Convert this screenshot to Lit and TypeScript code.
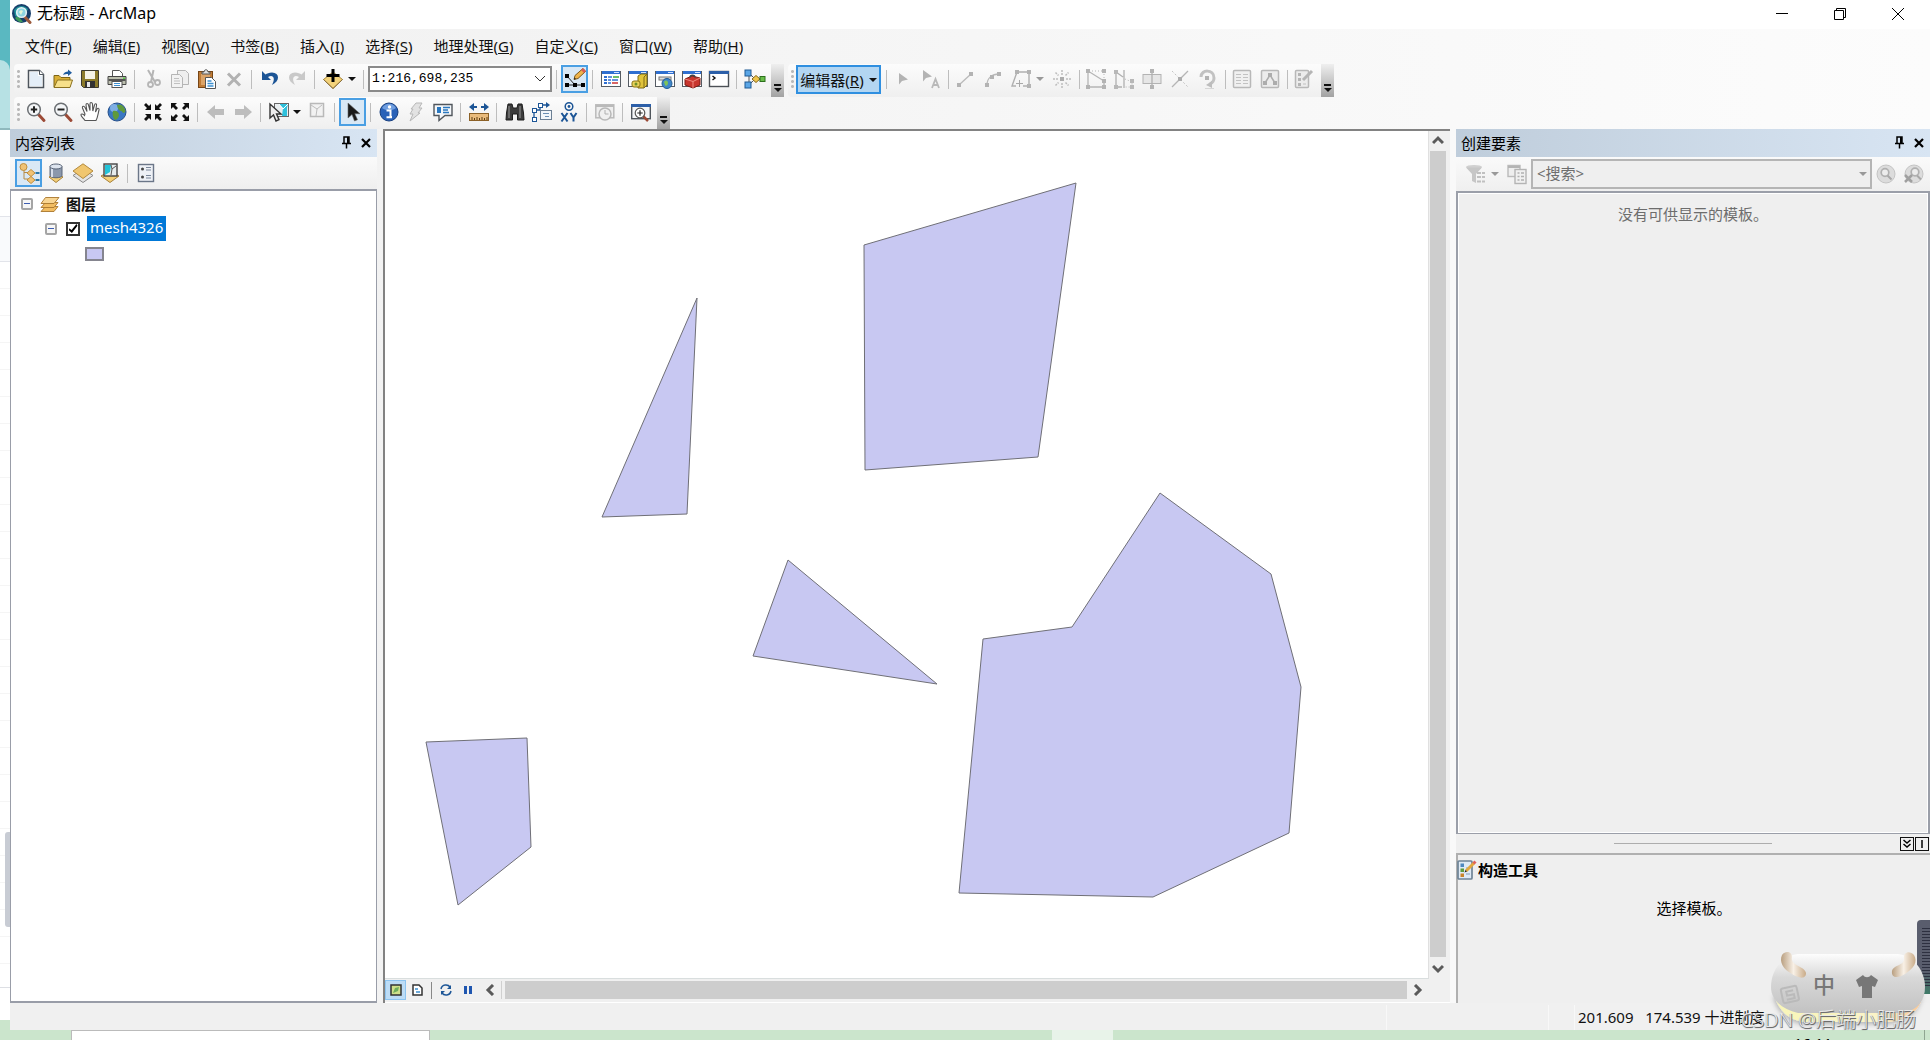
import { LitElement, html, svg, css, nothing, TemplateResult } from "lit";
import { customElement, state } from "lit/decorators.js";
import { classMap } from "lit/directives/class-map.js";

type Tool = { icon?: string; label?: string; on?: boolean; off?: boolean; caret?: boolean; sep?: boolean };

const SEP: Tool = { sep: true };

const windowFrame = (c = "#fff") => svg`
  <rect x="0.5" y="2.5" width="19" height="15" fill=${c} stroke="#555b63"/>
  <rect x="1" y="2" width="18" height="3" fill="#2f6fd0"/>
  <rect x="13" y="3" width="5" height="1" fill="#cfe0ff"/>`;

const lens = svg`
  <path d="M12.5 12.5L18 18.5" stroke="#9c4a36" stroke-width="3" stroke-linecap="round"/>
  <circle cx="8" cy="7.500" r="6.300" fill="#f3f5f7" stroke="#6b6f73" stroke-width="1.500"/>`;

const ICONS: Record<string, TemplateResult> = {
  fresh: svg`<path d="M2.500 1.500h11l4 4v13h-15z" fill="#fff" stroke="#4d545c" stroke-width="1.500"/><path d="M4 3h8v4h4v10H4z" fill="#e4eef8"/><path d="M13.500 1.500v4h4" fill="#fff" stroke="#4d545c"/>`,
  open: svg`<path d="M1 18V6.500h5l2 2h9V18z" fill="#d9ae35" stroke="#7d6416"/><path d="M1 18.500L4.500 11H19.500L17 18.500z" fill="#f7e08a" stroke="#8c7220"/><path d="M10 6c1-3 3-3.500 5-3.500V.500l4 3.200-4 3.200V5c-2 0-3 0-5 1z" fill="#1f5b9e"/>`,
  save: svg`<path d="M1.500 1.500h17v17h-15l-2-2z" fill="#8b7a2a" stroke="#3c3a30"/><rect x="5" y="2" width="10" height="8" fill="#f4f2e6"/><rect x="5" y="12" width="10" height="7" fill="#333"/><rect x="7" y="13" width="3" height="5" fill="#e8e8e8"/>`,
  print: svg`<path d="M5.500 7V1.500h7l3 3V7" fill="#fff" stroke="#555"/><path d="M1 7.500h18v8H1z" fill="#bcbfae" stroke="#444"/><path d="M1.500 11h17" stroke="#555" stroke-width="2"/><rect x="16" y="8.500" width="2" height="1.500" fill="#5c4"/><rect x="5" y="12.500" width="10" height="6" fill="#fff" stroke="#555"/><path d="M7 14.500h6M7 16.500h6" stroke="#3d8fd0"/>`,
  cut: svg`<path d="M5 1l7 12M10.500 1L8 13" stroke="#b5b5b5" stroke-width="2" fill="none"/><circle cx="7.500" cy="15.500" r="2.500" fill="none" stroke="#b5b5b5" stroke-width="1.800"/><circle cx="14.500" cy="13.500" r="2.500" fill="none" stroke="#b5b5b5" stroke-width="1.800"/>`,
  copy: svg`<path d="M7.500 1.500h8l3 3v11h-11z" fill="#efefef" stroke="#b5b5b5"/><path d="M1.500 5.500h8l3 3v10h-11z" fill="#f2f2f2" stroke="#b5b5b5"/><path d="M4 9.500h5M4 12h6M4 14.500h6" stroke="#c0c0c0"/>`,
  paste: svg`<rect x="1.500" y="2.500" width="14" height="16" fill="#bf7b36" stroke="#774616"/><rect x="4" y="5" width="9" height="11" fill="#dca468"/><path d="M5 5V3h2c0-3 4-3 4 0h2v2z" fill="#ddd" stroke="#555"/><path d="M8.500 8.500h6l4 4v7h-10z" fill="#fff" stroke="#555"/><path d="M10.500 12h4M10.500 14.500h6M10.500 17h6" stroke="#3d8fd0" stroke-width="1.300"/>`,
  del: svg`<path d="M4 4.500l12 12M16 4.500l-12 12" stroke="#b2b2b2" stroke-width="3"/>`,
  undo: svg`<path d="M2 2v9h9L8 8c5-3 8 1 4 8 8-4 8-12 0-12.500C9 3.500 7 4.500 5.500 5.500z" fill="#1c5596"/>`,
  redo: svg`<path d="M18 2v9H9l3-3C7 5 4 9 8 16 0 12 0 4 8 3.500c3 0 5 1 6.500 2z" fill="#c9c9c9"/>`,
  add: svg`<path d="M.5 10.500L10 3l9.500 7.500L10 19.500z" fill="#f3d27a" stroke="#a8873a"/><path d="M.5 10.500L10 19.500l9.500-9" fill="none" stroke="#8a7040"/><path d="M10 0v13M3.500 6.500h13" stroke="#000" stroke-width="3"/>`,
  sketch: svg`<path d="M2 7l8 9M2 16h16" stroke="#222"/><g fill="#000"><rect x="0" y="5" width="4" height="4"/><rect x="0" y="14" width="4" height="4"/><rect x="8" y="14" width="4" height="4"/><rect x="16" y="14" width="4" height="4"/></g><path d="M9 10.500l1-4 8-7 2.500 3-7.500 7z" fill="#f0b44a" stroke="#7c5a1c"/><path d="M16 1l2-2 3 3-2 2z" fill="#d95b52"/><path d="M9 10.500l.5-2 1.500 1.500z" fill="#222"/>`,
  table: svg`${windowFrame()}<path d="M3 8h3M3 11h3M3 14h3" stroke="#2f6fd0" stroke-width="2"/><path d="M7 8h4M7 11h3M7 14h3" stroke="#2f6fd0" stroke-width="1.300"/><path d="M12 8h6" stroke="#38a838" stroke-width="1.500"/><path d="M11 11h6" stroke="#2f6fd0" stroke-width="1.500"/><path d="M11 14h6" stroke="#c33" stroke-width="1.500"/>`,
  catalog: svg`${windowFrame()}<path d="M10 7l3-2h6v11l-3 3h-6z" fill="#e1c43c" stroke="#7e6a14"/><path d="M16 19V8l3-3" fill="none" stroke="#7e6a14"/><rect x="4" y="12" width="8" height="6" rx="2" fill="#e8d25a" stroke="#8a7215"/><circle cx="8" cy="15" r="1.500" fill="#6f8f2a"/>`,
  search: svg`${windowFrame()}<rect x="4" y="8" width="12" height="3" fill="#ddd" stroke="#777"/><circle cx="12" cy="14.500" r="5" fill="#3f86c8" stroke="#1f5a94"/><path d="M9 13c2-3 4-1 4 1s-2 4-3 2z" fill="#7fc457"/>`,
  toolbox: svg`${windowFrame()}<path d="M3 10l7-3 8 2v7l-7 3-8-3z" fill="#c8362e" stroke="#7d1a14"/><path d="M3 10l8 2.500 7-3.500M11 12.500V19" stroke="#f08a80" fill="none"/><path d="M8 8.500c0-3 5-3 5 0" fill="none" stroke="#444" stroke-width="1.400"/>`,
  python: svg`<rect x=".5" y="2.500" width="19" height="15" fill="#fff" stroke="#4c5056" stroke-width="1.400"/><rect x="0" y="2" width="20" height="3" fill="#2c5fa8"/><path d="M3.500 7l2.500 2-2.500 2" fill="none" stroke="#111" stroke-width="1.400"/>`,
  model: svg`<path d="M4 4v12M4 4l6 6-6 6M9 10h8" stroke="#555" fill="none"/><rect x="0" y="1" width="6" height="6" fill="#5ba6e6" stroke="#1f5a94"/><rect x="0" y="13" width="6" height="6" fill="#5ba6e6" stroke="#1f5a94"/><path d="M7 10l4-3.500L15 10l-4 3.500z" fill="#f0c64a" stroke="#86661a"/><rect x="15" y="7.500" width="5" height="5" fill="#69bd4a" stroke="#2c6f1c"/>`,
  play: svg`<path d="M6 4l9 6.500L9 12l-3 3.500z" fill="#b3b3b3"/>`,
  playA: svg`<path d="M2 1l9 6.500L5 9l-3 3.500z" fill="#b3b3b3"/><path d="M11 19l3.500-9 3.500 9M12.300 16h4.500" fill="none" stroke="#b9b9b9" stroke-width="1.800"/>`,
  line: svg`<path d="M4 16L16 5" stroke="#b9b9b9" stroke-width="1.300"/><rect x="2" y="14" width="4" height="4" fill="#b3b3b3"/><rect x="14" y="3" width="4" height="4" fill="#b3b3b3"/>`,
  arc: svg`<path d="M4 16C4 9 9 5 16 5" stroke="#b9b9b9" stroke-width="1.300" fill="none"/><rect x="2" y="14" width="4" height="4" fill="#b3b3b3"/><rect x="7" y="6" width="4" height="4" fill="#b3b3b3"/><rect x="14" y="3" width="4" height="4" fill="#b3b3b3"/>`,
  trap: svg`<path d="M6 3h12v14M6 3L1 17h4M12 17h6" stroke="#b0b0b0" stroke-width="1.400" fill="none"/><path d="M8.500 11v7M5 14.500h7" stroke="#a8a8a8"/><rect x="4" y="1" width="4" height="4" fill="#b3b3b3"/><rect x="16" y="1" width="4" height="4" fill="#b3b3b3"/><rect x="16" y="15" width="4" height="4" fill="#b3b3b3"/>`,
  star: svg`<path d="M10 1v5M10 14v5M1 10h5M14 10h5M3.500 3.500l3 3M13.500 13.500l3 3M3.500 16.500l3-3M13.500 6.500l3-3" stroke="#bdbdbd" stroke-width="1.500" stroke-dasharray="2 1"/><rect x="8" y="8" width="4" height="4" fill="#adadad"/>`,
  reshape: svg`<path d="M2 2v16h16M2 2l16 10v6" stroke="#b5b5b5" fill="none" stroke-width="1.300"/><path d="M3 2h15v10" stroke="#b5b5b5" fill="none" stroke-dasharray="1 2"/><g fill="#b3b3b3"><rect x="0" y="0" width="4" height="4"/><rect x="16" y="0" width="4" height="4"/><rect x="0" y="16" width="4" height="4"/><rect x="16" y="16" width="4" height="4"/><rect x="16" y="10" width="4" height="4"/></g>`,
  cutpoly: svg`<path d="M2 3v15h6M2 3l7 5M10 1v18" stroke="#b0b0b0" fill="none" stroke-width="1.300"/><path d="M11 10l7 3v5h-7" stroke="#b5b5b5" fill="none" stroke-dasharray="1 2"/><g fill="#b8b8b8"><rect x="0" y="1" width="4" height="4"/><rect x="0" y="16" width="4" height="4"/><rect x="16" y="10" width="4" height="4"/><rect x="16" y="16" width="4" height="4"/></g>`,
  split: svg`<rect x="1" y="5.500" width="18" height="9" fill="#e6e6e6" stroke="#b3b3b3"/><path d="M10 1v18" stroke="#b0b0b0" stroke-width="1.300"/><rect x="8" y="0" width="4" height="4" fill="#b3b3b3"/><rect x="8" y="16" width="4" height="4" fill="#b3b3b3"/>`,
  crossing: svg`<path d="M2 18L18 2" stroke="#b5b5b5" stroke-width="1.300"/><path d="M2 2l16 16" stroke="#c4c4c4" stroke-dasharray="2 2"/><rect x="8" y="8" width="4" height="4" fill="#adadad"/>`,
  rotate: svg`<path d="M3 8c0-8 13-8 13 1 0 4-2 5-4 6" fill="none" stroke="#c2c2c2" stroke-width="3"/><rect x="7" y="7" width="4" height="4" fill="#b3b3b3"/><path d="M8 16l6-4v7z" fill="#bdbdbd"/><path d="M7 19.500h9" stroke="#d6d6d6"/>`,
  attrs: svg`<rect x="1.500" y="1.500" width="17" height="17" rx="1" fill="#f0f0f0" stroke="#b8b8b8" stroke-width="1.500"/><path d="M4 5.500h5M4 8.500h5M4 11.500h5M4 14.500h5M11 5.500h5M11 8.500h5M11 11.500h5M11 14.500h5" stroke="#c2c2c2"/>`,
  vertices: svg`<rect x="1.500" y="1.500" width="17" height="17" rx="1" fill="#ececec" stroke="#b8b8b8" stroke-width="1.500"/><path d="M5 14l5-8 5 8" fill="none" stroke="#adadad" stroke-width="1.500"/><g fill="#adadad"><rect x="3" y="12" width="4" height="4"/><rect x="8" y="4" width="4" height="4"/><rect x="13" y="12" width="4" height="4"/></g>`,
  template: svg`<rect x="1.500" y="1.500" width="13" height="17" rx="1" fill="#ececec" stroke="#b8b8b8" stroke-width="1.500"/><g fill="#b5b5b5"><rect x="4" y="4" width="3" height="3"/><rect x="4" y="9" width="3" height="3"/><rect x="4" y="14" width="3" height="3"/></g><path d="M9 11l9-9" stroke="#b5b5b5" stroke-width="3"/><path d="M9 15h3" stroke="#c0c0c0"/>`,
  zoomIn: svg`${lens}<path d="M8 4.300v6.400M4.800 7.500h6.400" stroke="#222" stroke-width="2"/>`,
  zoomOut: svg`${lens}<path d="M4.500 7.500h7" stroke="#222" stroke-width="2"/>`,
  hand: svg`<path d="M5 18.500c-2-3-4-4-4-5.500s2-1.500 3.500.5L5 12 2.500 6C2 4 4 3.500 5 5.500l2 4L6 3c0-2 2-2 2.500 0L10 8.500V2c0-2 2-2 2.500 0l.3 7L14.500 3c.5-2 2.500-1.500 2 .5L15.500 10l1.500-3c1-1.500 2.500-.5 2 1-1 4-1.500 8-3 10.500z" fill="#fff" stroke="#555" stroke-width="1.100"/>`,
  globe: svg`<circle cx="10" cy="10" r="9" fill="#3a78c4" stroke="#27508a"/><circle cx="7" cy="6" r="4" fill="#9cc6f2" opacity=".7"/><path d="M10 3c4-2 8 2 8.500 6-1 3-3 2-4 0-2 0-4-2-4.500-6zM6 9c3-1 6 1 6 4 0 2-2 5-4 5-2-2-3-6-2-9z" fill="#5f9a3c"/>`,
  shrink: svg`<g fill="#111"><path d="M8 8H2l2-2-3-3 2-2 3 3 2-2zM12 8V2l2 2 3-3 2 2-3 3 2 2zM8 12v6l-2-2-3 3-2-2 3-3-2-2zM12 12h6l-2 2 3 3-2 2-3-3-2 2z"/></g>`,
  grow: svg`<g fill="#111"><path d="M1 1h6L5 3l3 3-2 2-3-3-2 2zM19 1v6l-2-2-3 3-2-2 3-3-2-2zM1 19v-6l2 2 3-3 2 2-3 3 2 2zM19 19h-6l2-2-3-3 2-2 3 3 2-2z"/></g>`,
  back: svg`<path d="M1 10l8-7v4h9v6H9v4z" fill="#bdbdbd"/>`,
  forward: svg`<path d="M19 10l-8-7v4H2v6h9v4z" fill="#bdbdbd"/>`,
  select: svg`<rect x="5.500" y="1.500" width="14" height="13" fill="#e9eef0" stroke="#666"/><path d="M10 2l4 4-1 8h5V6l1-4z" fill="#2ec1dc"/><path d="M14 7l5-5M14 7l-4-5" stroke="#fff" fill="none"/><path d="M1 2v14l3.500-3 2.500 6 3-1.300L7.500 12H12z" fill="#eee" stroke="#333" stroke-width="1.400"/>`,
  clear: svg`<rect x="3.500" y="1.500" width="13" height="13" fill="#f2f2f2" stroke="#b9b9b9" stroke-width="1.500"/><path d="M4 3l6 4 5-4M10 7l-1 7" stroke="#bdbdbd" fill="none"/>`,
  arrow: svg`<path d="M5 1v15l4-3.500L11.500 19l3-1.300-2.700-6H17z" fill="#1a1a1a" stroke="#666" stroke-width=".6"/>`,
  info: svg`<circle cx="10" cy="10" r="9" fill="#2a62b8" stroke="#173f80"/><path d="M3 6c4-6 11-5 14 0-4 3-10 3-14 0z" fill="#6f9ee0"/><circle cx="10.500" cy="5" r="1.700" fill="#fff"/><path d="M7.500 8.500h4V15h1.500M7.500 15.200h5.500" stroke="#fff" stroke-width="2" fill="none"/>`,
  bolt: svg`<path d="M10 1h6l-3 5h3l-4 5h2L4 19l3-7H4l3-5H5z" fill="#e2e2e2" stroke="#b8b8b8"/>`,
  popup: svg`<path d="M1 2.500h18v11h-7L6 18.500v-5H1z" fill="#f4f7fa" stroke="#50565c" stroke-width="1.400"/><rect x="4" y="5" width="4" height="6" fill="#2a78c0"/><path d="M10 5.500h7M10 8h5M10 10.500h6" stroke="#2a78c0" stroke-width="1.300"/>`,
  measure: svg`<path d="M0 5l5-4v3h3v2H5v3zM20 5l-5-4v3h-3v2h3v3z" fill="#1c5596"/><rect x=".5" y="11.500" width="19" height="7" fill="#e9bb7c" stroke="#8c6127"/><path d="M3 18v-3M5.500 18v-2M8 18v-3M10.500 18v-2M13 18v-3M15.500 18v-2M18 18v-3" stroke="#5f3e12"/>`,
  binoc: svg`<path d="M3 2h4l1 4h4l1-4h4l1.500 9L19 18h-6.500v-6h-5v6H1l.5-7z" fill="#3c3c3c" stroke="#1c1c1c"/><path d="M4 4v12M15 4v12" stroke="#999"/>`,
  route: svg`<path d="M2 18V8h6V3h7" stroke="#1c5596" fill="none" stroke-width="1.300"/><path d="M14 0l4 3-4 3z" fill="#1c5596"/><g fill="#fff" stroke="#1c5596"><rect x=".5" y="6.500" width="4" height="4"/><rect x="6.500" y="1.500" width="4" height="4"/><rect x=".5" y="15.500" width="4" height="4"/></g><rect x="8.500" y="8.500" width="11" height="9" fill="#f2f6fa" stroke="#6b7f94"/><path d="M11 11.500h6M13 14.500h4" stroke="#6b8fb4"/>`,
  xy: svg`<circle cx="10" cy="4.500" r="3.800" fill="none" stroke="#1c5596" stroke-width="1.500"/><circle cx="10" cy="4.500" r="1.400" fill="#1c5596"/><path d="M2.500 11l6 8.500M8.500 11l-6 8.500M11.500 11l3 4.500 3-4.500M14.500 15v4.500" stroke="#1c5596" stroke-width="2" fill="none"/>`,
  clock: svg`<rect x=".8" y="2.800" width="18" height="13" fill="#efefef" stroke="#bababa" stroke-width="1.500"/><path d="M1 4h18" stroke="#bababa" stroke-width="2"/><circle cx="10" cy="12" r="6" fill="#f0f0f0" stroke="#b8b8b8" stroke-width="1.500"/><path d="M10 8v4h3.500" stroke="#b0b0b0" fill="none"/>`,
  zoomWin: svg`<rect x=".7" y="2.700" width="18.600" height="14" fill="#f4f6f8" stroke="#50565c" stroke-width="1.400"/><rect x="0" y="2" width="20" height="3" fill="#2c5fa8"/><path d="M12 14l5 5" stroke="#9c4a36" stroke-width="2.500"/><circle cx="9" cy="11" r="4.800" fill="#fff" stroke="#555" stroke-width="1.200"/><path d="M9 8.300v5.400M6.300 11h5.400" stroke="#222" stroke-width="1.200"/>`,
  tree: svg`<path d="M5 5v11h5M5 9.500h6" stroke="#b58a45" fill="none"/><circle cx="4.500" cy="4" r="3.500" fill="#f0c274" stroke="#c08f3e"/><path d="M8 10l4-3.500 4 3.500-4 3.500zM8 17l4-3.500 4 3.500-4 3.500z" fill="#f0c274" stroke="#c08f3e"/><path d="M16.500 10h4M16.500 17h4" stroke="#2a78a8" stroke-width="2"/>`,
  source: svg`<path d="M3 14l7 5.500 7-5.500-7-4z" fill="#f3cf77" stroke="#a8813a"/><path d="M4 3.500v9c0 3 12 3 12 0v-9z" fill="#8b98ac" stroke="#5b6678"/><path d="M6 5v9" stroke="#d7deea" stroke-width="2"/><ellipse cx="10" cy="3.500" rx="6" ry="2.500" fill="#dde4ee" stroke="#5b6678"/>`,
  visible: svg`<path d="M0 12.500L10 6l10 6.500-10 7z" fill="#e4e4e4" stroke="#888"/><path d="M0 8L10 .8 20 8l-10 7.500z" fill="#f0c66f" stroke="#b38a3d"/>`,
  selection: svg`<path d="M1 13l9-5 9 5-9 6.500z" fill="#f3cf77" stroke="#a8813a"/><rect x="4" y="1" width="13" height="12" fill="#e6ecee" stroke="#444" stroke-width="1.400"/><path d="M5 2h6l-1 7-5 3z" fill="#22c3d8"/><path d="M11 2l1 4 4-3M12 6l-1 6" stroke="#555" fill="none"/>`,
  options: svg`<rect x="2.500" y="1.500" width="15" height="17" fill="#eef1f6" stroke="#6b7688" stroke-width="1.400"/><circle cx="6.500" cy="6" r="1.500" fill="#444"/><circle cx="6.500" cy="14" r="1.500" fill="#444"/><path d="M10 4.500h5M10 7h5M10 12.500h5M10 15h5" stroke="#7a879b"/>`,
  filter: svg`<ellipse cx="8" cy="3" rx="8" ry="2" fill="#d0d0d0"/><path d="M0 3.500L6 10v7l4 2v-9l6-6.500z" fill="#c6c6c6"/><path d="M11 9h8M11 13h8M11 17.500h8" stroke="#c0c0c0" stroke-width="2" stroke-dasharray="4 1"/>`,
  docs: svg`<rect x="1" y="1.500" width="12" height="11" fill="#eee" stroke="#bababa" stroke-width="1.400"/><path d="M1 3h12" stroke="#b4b4b4" stroke-width="2"/><rect x="8" y="5.500" width="11" height="14" fill="#f0f0f0" stroke="#b4b4b4" stroke-width="1.400"/><path d="M10.500 9h2M14 9h3M10.500 12.500h2M14 12.500h3M10.500 16h2M14 16h3" stroke="#b0b0b0" stroke-width="1.500"/>`,
  find: svg`<circle cx="10" cy="10" r="9" fill="#dcdcdc" stroke="#c4c4c4"/><circle cx="9" cy="8.500" r="3.800" fill="#ececec" stroke="#b0b0b0" stroke-width="1.700"/><path d="M11.500 11.500l4 4" stroke="#a8a8a8" stroke-width="2"/>`,
  findClear: svg`<circle cx="11" cy="10" r="9" fill="#dcdcdc" stroke="#c4c4c4"/><circle cx="12" cy="8" r="3.800" fill="#ececec" stroke="#b0b0b0" stroke-width="1.700"/><path d="M14 11.500l4 4" stroke="#a8a8a8" stroke-width="2"/><path d="M2 11l7 7M9 11l-7 7" stroke="#a0a0a0" stroke-width="2.500"/>`,
  construct: svg`<rect x="1" y="1" width="14" height="18" rx="1" fill="#dfeaf5" stroke="#6f8496" stroke-width="1.700"/><rect x="3.500" y="3.500" width="3.500" height="3.500" fill="#4d88c0"/><rect x="3.500" y="8.500" width="3.500" height="3.500" fill="#5f9c3e"/><rect x="3.500" y="13.500" width="3.500" height="3.500" fill="#c8842a"/><path d="M9 8h4M9 14h4" stroke="#7f9db8"/><path d="M9 11l8-8" stroke="#e2a83e" stroke-width="3"/><path d="M16.500 3.500l2-2" stroke="#e0625a" stroke-width="3"/><path d="M7.500 12.500l1-2.500 1.500 1.500z" fill="#222"/>`,
  layers: svg`<g fill="#f2bd62" stroke="#a8762c" stroke-width=".9"><path d="M1 17.500l4.500-5H18l-4 5z"/><path d="M1 13.500l4.500-5H18l-4 5z"/><path d="M1 9.500l4.500-6H19l-5 6z" fill="#f8d592"/></g>`,
};

const MENUS: [string, string][] = [
  ["文件", "F"], ["编辑", "E"], ["视图", "V"], ["书签", "B"], ["插入", "I"],
  ["选择", "S"], ["地理处理", "G"], ["自定义", "C"], ["窗口", "W"], ["帮助", "H"],
];

const FILE_TOOLS: Tool[] = [
  { icon: "fresh", label: "新建" }, { icon: "open", label: "打开" }, { icon: "save", label: "保存" }, { icon: "print", label: "打印" }, SEP,
  { icon: "cut", label: "剪切", off: true }, { icon: "copy", label: "复制", off: true }, { icon: "paste", label: "粘贴" }, { icon: "del", label: "删除", off: true }, SEP,
  { icon: "undo", label: "撤消" }, { icon: "redo", label: "恢复", off: true }, SEP,
  { icon: "add", label: "添加数据", caret: true }, SEP,
];

const WINDOW_TOOLS: Tool[] = [
  SEP, { icon: "sketch", label: "编辑器工具条", on: true }, SEP,
  { icon: "table", label: "内容列表" }, { icon: "catalog", label: "目录" }, { icon: "search", label: "搜索" }, { icon: "toolbox", label: "工具箱" }, { icon: "python", label: "Python" }, SEP,
  { icon: "model", label: "模型构建器" },
];

const EDIT_TOOLS: Tool[] = [
  SEP, { icon: "play", label: "编辑工具", off: true }, { icon: "playA", label: "编辑注记工具", off: true }, SEP,
  { icon: "line", label: "直线段", off: true }, { icon: "arc", label: "弧段", off: true }, { icon: "trap", label: "追踪", off: true, caret: true }, { icon: "star", label: "点", off: true }, SEP,
  { icon: "reshape", label: "编辑折点", off: true }, { icon: "cutpoly", label: "整形要素", off: true }, { icon: "split", label: "裁剪面", off: true }, { icon: "crossing", label: "分割", off: true }, { icon: "rotate", label: "旋转", off: true }, SEP,
  { icon: "attrs", label: "属性", off: true }, { icon: "vertices", label: "草图属性", off: true }, SEP,
  { icon: "template", label: "创建要素", off: true },
];

const VIEW_TOOLS: Tool[] = [
  { icon: "zoomIn", label: "放大" }, { icon: "zoomOut", label: "缩小" }, { icon: "hand", label: "平移" }, { icon: "globe", label: "全图" }, SEP,
  { icon: "shrink", label: "固定比例放大" }, { icon: "grow", label: "固定比例缩小" }, SEP,
  { icon: "back", label: "后退", off: true }, { icon: "forward", label: "前进", off: true }, SEP,
  { icon: "select", label: "选择要素", caret: true }, { icon: "clear", label: "清除选择", off: true }, SEP,
  { icon: "arrow", label: "选择元素", on: true }, SEP,
  { icon: "info", label: "识别" }, { icon: "bolt", label: "超链接", off: true }, { icon: "popup", label: "HTML 弹出窗口" }, SEP,
  { icon: "measure", label: "测量" }, SEP,
  { icon: "binoc", label: "查找" }, { icon: "route", label: "查找路径" }, { icon: "xy", label: "转到 XY" }, SEP,
  { icon: "clock", label: "时间滑块", off: true }, SEP,
  { icon: "zoomWin", label: "查看器窗口" },
];

const CONTENT_TOOLS: Tool[] = [
  { icon: "tree", label: "按绘制顺序列出", on: true }, { icon: "source", label: "按源列出" }, { icon: "visible", label: "按可见性列出" }, { icon: "selection", label: "按选择列出" }, SEP,
  { icon: "options", label: "选项" },
];

const POLYGONS = [
  "1076,183 864,245 865,470 1038,457",
  "697,298 602,517 687,514",
  "788,560 753,656 937,684",
  "426,742 527,738 531,847 458,905",
  "1160,493 1271,574 1301,687 1289,833 1153,897 959,893 983,639 1072,627",
];

const icon = (name: string) => html`<svg class="icon" viewBox="0 0 20 20" aria-hidden="true">${ICONS[name]}</svg>`;

const chevron = (d: string) => html`<svg class="chevron" viewBox="0 0 12 12" aria-hidden="true"><path d=${d}></path></svg>`;

@customElement("app-root")
export class AppRoot extends LitElement {
  @state() private layerVisible = true;

  static styles = css`
    :host {
      display: block;
      font: 15px/20px "Noto Sans", "Noto Sans CJK SC", sans-serif;
      color: #111;
    }
    * { box-sizing: border-box; }
    button, select, input { font: inherit; color: inherit; margin: 0; }
    button { background: none; border: 1px solid transparent; padding: 0; }
    svg { display: block; }
    .screen {
      position: relative;
      height: 100vh;
      overflow: hidden;
      display: grid;
      grid-template: minmax(0, 1fr) 10px / 10px minmax(0, 1fr);
      background: #cbe5cc;
    }
    .behind { display: flex; flex-direction: column; background: #cbe5cc; }
    .behind-top { height: 130px; background: #5ab8c1; border-bottom: 2px solid #8fb9bd; padding-top: 60px; }
    .behind-card { height: 68px; background: #b7e1e4; border-radius: 0 10px 0 0; }
    .behind-page { flex: 1; background: #fff; display: flex; flex-direction: column; padding-top: 86px; }
    .behind-row { height: 46px; background: #f9fafc; border: solid #e2e4ea; border-width: 1px 0; flex: none; }
    .behind-list {
      flex: 1;
      background: repeating-linear-gradient(#fff 0 26px, #f5f5f5 26px 27px);
      display: flex;
      flex-direction: column;
      justify-content: flex-end;
      align-items: flex-end;
      padding-bottom: 60px;
      border-bottom: 1px solid #dddfe4;
    }
    .behind-thumb { width: 5px; height: 95px; border-radius: 3px 0 0 3px; background: #c8ccd4; }
    .behind-foot { height: 32px; }
    .behind-gap { height: 10px; background: #cbe5cc; }

    .window {
      display: flex;
      flex-direction: column;
      min-height: 0;
      background: linear-gradient(90deg, #f0f0f0, #fcfcfc);
    }
    .titlebar { height: 29px; flex: none; background: #fff; display: flex; align-items: center; padding: 0 3px 4px 2px; color: #000; }
    .titlebar svg { margin-top: 3px; }
    .title { flex: 1; padding-left: 5px; font-weight: 400; font-size: 16px; margin: 0; }
    .win-btn { width: 58px; height: 24px; display: grid; place-items: center; }
    .win-btn path { fill: none; stroke: #000; }
    .menubar { height: 35px; flex: none; display: flex; align-items: center; padding: 0 0 2px 15px; gap: 21px; }
    .menubar button { border: 0; white-space: nowrap; }

    .bars { display: flex; flex: none; gap: 4px; padding-left: 4px; }
    .bar { display: flex; height: 33px; border-radius: 4px 0 0 4px; }
    .bar.low { height: 32px; }
    .bar-body {
      display: flex;
      align-items: flex-start;
      padding: 1px 3px 0 8px;
      background: radial-gradient(circle, #b9b9b9 1px, transparent 2px) 3px 5px / 3px 5px no-repeat,
        radial-gradient(circle, #b9b9b9 1px, transparent 2px) 3px 10px / 3px 5px no-repeat,
        radial-gradient(circle, #b9b9b9 1px, transparent 2px) 3px 15px / 3px 5px no-repeat,
        radial-gradient(circle, #b9b9b9 1px, transparent 2px) 3px 20px / 3px 5px no-repeat,
        linear-gradient(#fcfcfc, #efefef);
      border-radius: 4px 0 0 4px;
    }
    .tool { width: 27px; height: 28px; flex: none; display: flex; align-items: center; justify-content: center; }
    .tool.caret { width: 40px; justify-content: flex-start; padding-left: 3px; gap: 5px; }
    .low .tool.caret { width: 38px; gap: 4px; }
    .tool.on { background: #d9e8f5; border: 2px solid #4a9fe3; }
    .icon { width: 20px; height: 20px; flex: none; overflow: visible; }
    .sep { width: 1px; height: 19px; margin: 5px 4px; background: #bdbdbd; flex: none; }
    .edit .tool { width: 28px; }
    .edit .tool.caret { width: 41px; }
    .edit .sep { margin: 5px 2px 5px 3px; }
    .drop { width: 0; height: 0; border: 4px solid transparent; border-top: 4px solid #111; border-bottom: 0; flex: none; }
    .tool:disabled .drop { border-top-color: #999; }
    .more {
      width: 13px;
      flex: none;
      display: flex;
      flex-direction: column;
      align-items: center;
      justify-content: flex-end;
      gap: 2px;
      padding-bottom: 5px;
      border: 0;
      background: linear-gradient(#efefef, #a2a2a2);
    }
    .more::before { content: ""; width: 7px; height: 2px; background: #111; }
    .field { position: relative; display: flex; align-items: center; }
    .field select { appearance: none; border-radius: 0; opacity: 1; width: 100%; }
    .scale { width: 184px; margin-top: 1px; }
    .scale select { height: 26px; border: 2px solid #8a8a8a; background: #fff; padding: 0 24px 0 2px; font: 13px/20px "Liberation Mono", monospace; color: #000; }
    .field .chevron, .field .drop { position: absolute; right: 6px; pointer-events: none; }
    .chevron { width: 12px; height: 12px; }
    .chevron path { fill: none; stroke: #5a5a5a; stroke-width: 3; }
    .scale .chevron path { stroke-width: 1; stroke: #333; }
    .editor { width: 85px; height: 29px; margin-right: 2px; display: flex; align-items: center; justify-content: center; gap: 5px; background: #b3d6f2; border: 2px solid #2f8fe0; white-space: nowrap; }

    .body { flex: 1; min-height: 0; display: grid; grid-template-columns: 367fr 1067fr 474fr; gap: 6px; }
    .panel { display: flex; flex-direction: column; min-width: 0; min-height: 0; }
    .panel-head {
      height: 28px;
      flex: none;
      display: flex;
      align-items: center;
      gap: 10px;
      padding: 0 6px 1px 5px;
      background: linear-gradient(90deg, #bfcddb, #d8e5f3);
    }
    .panel-head h2 { flex: 1; margin: 0; font-size: 15px; font-weight: 400; color: #000; }
    .panel-head button { border: 0; }
    .panel-tools { height: 32px; flex: none; display: flex; align-items: center; padding: 0 5px; background: linear-gradient(#fafafa, #efefef); }
    .contents { flex: 1; min-height: 0; margin: 0; background: #fff; border: 2px solid #999da8; border-width: 2px 1px 2px 1px; padding: 0 0 0 10px; }
    .row { display: flex; align-items: center; height: 25px; }
    .row.sub { padding-left: 24px; }
    .row.leaf { padding-left: 64px; }
    .expander { width: 12px; height: 12px; border: 2px solid #a5a5a5; border-radius: 2px; background: #f6f6f6; display: grid; place-items: center; flex: none; }
    .expander::before { content: ""; width: 6px; height: 1px; background: #3c5cb0; }
    .group { font-weight: 700; padding-left: 6px; }
    .row .icon { margin-left: 7px; }
    .check { appearance: none; width: 14px; height: 14px; border: 2px solid #333; background: #fff; margin: 0 7px 0 9px; display: grid; place-items: center; flex: none; }
    .check:checked::before { content: ""; width: 9px; height: 9px; background: #000; clip-path: polygon(0 45%, 35% 68%, 88% 0, 100% 20%, 38% 100%, 0 68%); }
    .layer { background: #0078d7; color: #fff; height: 25px; line-height: 22px; padding: 0 3px; }
    .swatch { width: 19px; height: 14px; background: #c8c8f2; border: 2px solid #85858f; }

    .map {
      display: grid;
      grid-template: minmax(0, 1fr) 24px / minmax(0, 1fr) 21px;
      border: solid #828282;
      border-width: 2px 0 0 2px;
      min-width: 0;
      min-height: 0;
      background: #f0f0f0;
    }
    .canvas { background: #fff; width: 100%; height: 100%; border-right: 1px solid #e0e0e0; border-bottom: 1px solid #d9dede; }
    .canvas polygon { fill: #c8c8f2; stroke: #6f6f76; stroke-width: 1; }
    .vscroll { display: flex; flex-direction: column; align-items: center; padding: 0 3px 0 0; }
    .vscroll button, .hscroll button { border: 0; display: grid; place-items: center; flex: none; }
    .vscroll button { height: 20px; width: 18px; }
    .thumb { flex: 1; background: #cdcdcd; }
    .vscroll .thumb { width: 16px; }
    .vscroll .end { height: 22px; }
    .hscroll { grid-column: 1 / -1; display: flex; align-items: center; padding: 0 21px 1px 0; border-bottom: 1px solid #fff; }
    .hscroll .mini { width: 22px; height: 20px; }
    .hscroll .mini.on { width: 21px; background: #bcdcf6; border: 1px solid #8cc4f0; }
    .hscroll .rule { width: 1px; height: 17px; background: #888; margin: 0 3px; }
    .hscroll .thumb { height: 18px; margin-left: 3px; }
    .hscroll .edge { width: 1px; height: 18px; background: #d0d0d0; }
    .hscroll .end { width: 22px; }

    .features { background: #efefef; }
    .features .panel-tools { height: 34px; padding: 0 4px 0 6px; }
    .features .tool.caret { width: 41px; gap: 5px; }
    .seek { flex: 1; margin-left: 1px; }
    .seek select { height: 30px; border: 2px solid #b5b5b5; background: #efefef; color: #6d6d6d; padding: 0 20px 2px 4px; }
    .seek .drop { border-top-color: #999; right: 5px; }
    .templates { flex: 1; min-height: 0; border: 2px solid #9b9fa9; border-bottom-width: 1px; box-shadow: inset 0 0 0 1px #fff; padding-top: 11px; text-align: center; color: #6d6d6d; }
    .templates p, .tools p { margin: 0; }
    .splitter { height: 19px; flex: none; display: grid; grid-template-columns: 1fr 158px 1fr; align-items: center; }
    .splitter hr { margin: 0; border: 0; height: 1px; background: #adadad; grid-column: 2; width: 100%; }
    .splitter-btns { display: flex; justify-content: flex-end; gap: 1px; padding-right: 1px; }
    .splitter-btns button { width: 14px; height: 14px; border: 1px solid #111; display: grid; place-items: center; }
    .splitter-btns path { fill: none; stroke: #000; stroke-width: 1.500; }
    .tools { height: 150px; flex: none; border: solid #b0b0b0; border-width: 2px 0 0 2px; padding-top: 4px; text-align: center; color: #000; }
    .tools h3 { margin: 0 0 17px; display: flex; align-items: center; gap: 1px; font-size: 15px; line-height: 22px; }
    .tools .icon { margin-left: -1px; }

    .status { height: 27px; flex: none; display: flex; background: #f0f0f0; gap: 4px; padding-top: 2px; }
    .status span { border-left: 1px solid #f8f8f8; }
    .status .message { flex: 1; border: 0; }
    .status .cell-a { width: 158px; }
    .status .cell-b { width: 22px; }
    .status .coords { width: 356px; padding: 2px 0 0 3px; white-space: pre; }

    .taskbar { grid-column: 1 / -1; display: flex; overflow: hidden; }
    .search-box { width: 359px; margin-left: 71px; border: 1px solid #bbb; border-bottom: 0; background: #fff; }
    .task { width: 61px; margin-left: 622px; background: #e8f3e9; }
    .clock { margin-left: auto; padding: 3px 92px 0 0; border-right: 1px solid #8fa591; margin-right: 5px; color: #000; }

    .meter { position: absolute; right: 0; bottom: 46px; width: 13px; height: 74px; border-radius: 4px 0 0 4px; background: repeating-linear-gradient(#2d3040 0 1px, transparent 1px 3px) 5px 8px / 8px 60px no-repeat, linear-gradient(#595d6d 70%, #3f7b68); }
    .ime { position: absolute; right: 2px; bottom: 14px; width: 160px; height: 76px; }
    .ime svg { width: 100%; height: 100%; overflow: visible; }
    .ime-lang { position: absolute; left: 45px; top: 22px; font-size: 22px; line-height: 24px; color: #777; font-weight: 500; }
    .mark { position: absolute; right: 14px; bottom: 6px; font-size: 20px; line-height: 28px; font-weight: 300; color: #e9e9e9; text-shadow: 1px 1px 0 #6d6d6d, 0 1px 1px #6d6d6d; white-space: nowrap; }
  `;

  private tools(list: Tool[]) {
    return list.map((t) =>
      t.sep
        ? html`<span class="sep"></span>`
        : html`<button class=${classMap({ tool: true, on: !!t.on, caret: !!t.caret })} aria-label=${t.label ?? ""} ?disabled=${!!t.off}>
            ${icon(t.icon!)}${t.caret ? html`<span class="drop"></span>` : nothing}
          </button>`
    );
  }

  private more() {
    return html`<button class="more" aria-label="工具条选项"><span class="drop"></span></button>`;
  }

  private headButtons() {
    return html`
      <button aria-label="自动隐藏"><svg width="9" height="13" viewBox="0 0 9 13"><path d="M2 7V1h5v6M0 7.500h9M4.500 8v4.500" fill="none" stroke="#000" stroke-width="1.500"/><path d="M6 1v6" stroke="#000" stroke-width="2"/></svg></button>
      <button aria-label="关闭"><svg width="10" height="10" viewBox="0 0 10 10"><path d="M1 1l8 8M9 1l-8 8" stroke="#000" stroke-width="2.200"/></svg></button>`;
  }

  render() {
    return html`
      <div class="screen">
        <div class="behind">
          <div class="behind-top"><div class="behind-card"></div></div>
          <div class="behind-page">
            <div class="behind-row"></div>
            <div class="behind-list"><div class="behind-thumb"></div></div>
            <div class="behind-foot"></div>
          </div>
          <div class="behind-gap"></div>
        </div>

        <div class="window">
          <header class="titlebar">
            <svg width="20" height="20" viewBox="0 0 20 20" aria-hidden="true">
              <circle cx="9.500" cy="9.500" r="9.500" fill="#173f6b"/>
              <path d="M2 6c4-5 10-5 14-1-2 5-9 10-13 7z" fill="#1f8f98"/>
              <path d="M3 14c3-3 5 0 8 4-3 1-6-1-8-4z" fill="#3d9a5a"/>
              <path d="M12 12l6 6.500" stroke="#9c5a3c" stroke-width="3" stroke-linecap="round"/>
              <circle cx="9.500" cy="8.500" r="4.800" fill="#8fd6e2" stroke="#e5f0f4" stroke-width="1.600"/>
              <path d="M7 8c1-2 3-2 4-1l-2 4z" fill="#e4f6d8"/>
            </svg>
            <h1 class="title">无标题 - ArcMap</h1>
            <button class="win-btn" aria-label="最小化"><svg width="12" height="12"><path d="M0 5.500h12"/></svg></button>
            <button class="win-btn" aria-label="还原"><svg width="12" height="12"><path d="M.5 2.500h9v9h-9zM2.500 2.500v-2h9v9h-2"/></svg></button>
            <button class="win-btn" aria-label="关闭"><svg width="12" height="12"><path d="M0 0l12 12M12 0L0 12"/></svg></button>
          </header>

          <nav class="menubar">${MENUS.map(([name, key]) => html`<button>${name}(<u>${key}</u>)</button>`)}</nav>

          <div class="bars">
            <div class="bar">
              <div class="bar-body">
                ${this.tools(FILE_TOOLS)}
                <div class="field scale">
                  <select aria-label="比例"><option>1:216,698,235</option></select>
                  ${chevron("M1 3l5 5 5-5")}
                </div>
                ${this.tools(WINDOW_TOOLS)}
              </div>
              ${this.more()}
            </div>
            <div class="bar edit">
              <div class="bar-body">
                <button class="editor"><span>编辑器(<u>R</u>)</span><span class="drop"></span></button>
                ${this.tools(EDIT_TOOLS)}
              </div>
              ${this.more()}
            </div>
          </div>
          <div class="bars">
            <div class="bar low">
              <div class="bar-body">${this.tools(VIEW_TOOLS)}</div>
              ${this.more()}
            </div>
          </div>

          <main class="body">
            <section class="panel">
              <div class="panel-head"><h2>内容列表</h2>${this.headButtons()}</div>
              <div class="panel-tools">${this.tools(CONTENT_TOOLS)}</div>
              <div class="contents">
                <div class="row"><button class="expander" aria-label="折叠图层"></button>${icon("layers")}<span class="group">图层</span></div>
                <div class="row sub">
                  <button class="expander" aria-label="折叠 mesh4326"></button>
                  <input class="check" id="mesh" type="checkbox" .checked=${this.layerVisible}
                    @change=${(e: Event) => (this.layerVisible = (e.target as HTMLInputElement).checked)} />
                  <label class="layer" for="mesh">mesh4326</label>
                </div>
                <div class="row leaf"><span class="swatch"></span></div>
              </div>
            </section>

            <section class="map">
              <svg class="canvas" viewBox="385 131 1043 847" preserveAspectRatio="xMinYMin meet">
                ${this.layerVisible ? POLYGONS.map((p) => svg`<polygon points=${p}></polygon>`) : nothing}
              </svg>
              <div class="vscroll">
                <button aria-label="向上滚动">${chevron("M1 8l5-5 5 5")}</button>
                <div class="thumb"></div>
                <button class="end" aria-label="向下滚动">${chevron("M1 4l5 5 5-5")}</button>
              </div>
              <div class="hscroll">
                <button class="mini on" aria-label="数据视图"><svg width="12" height="12"><rect x="1" y="1" width="10" height="10" fill="#cfe08a" stroke="#333" stroke-width="1.500"/><path d="M3 9l2-5 4-1-1 4z" fill="#6fae5c"/></svg></button>
                <button class="mini" aria-label="布局视图"><svg width="12" height="12"><path d="M2 1h6l3 3v7H2z" fill="#fff" stroke="#333" stroke-width="1.500"/><path d="M4 5h3M5 8h4" stroke="#3d8fd0" stroke-width="1.500"/></svg></button>
                <span class="rule"></span>
                <button class="mini" aria-label="刷新"><svg width="12" height="12"><path d="M1 5c1-5 7-5 9-2M11 7c-1 5-7 5-9 2" fill="none" stroke="#1c5596" stroke-width="1.500"/><path d="M11 1v4H7zM1 11V7h4z" fill="#1c5596"/></svg></button>
                <button class="mini" aria-label="暂停绘制"><svg width="12" height="12"><path d="M3.500 2v8M8.500 2v8" stroke="#1f56b0" stroke-width="3"/></svg></button>
                <button class="mini" aria-label="向左滚动">${chevron("M9 1L4 6l5 5")}</button>
                <span class="edge"></span>
                <div class="thumb"></div>
                <button class="end" aria-label="向右滚动">${chevron("M3 1l5 5-5 5")}</button>
              </div>
            </section>

            <section class="panel features">
              <div class="panel-head"><h2>创建要素</h2>${this.headButtons()}</div>
              <div class="panel-tools">
                ${this.tools([{ icon: "filter", label: "组织模板", off: true, caret: true }, { icon: "docs", label: "复制模板", off: true }])}
                <div class="field seek">
                  <select aria-label="搜索模板" disabled><option>&lt;搜索&gt;</option></select>
                  <span class="drop"></span>
                </div>
                ${this.tools([{ icon: "find", label: "搜索", off: true }, { icon: "findClear", label: "清除搜索", off: true }])}
              </div>
              <div class="templates"><p>没有可供显示的模板。</p></div>
              <div class="splitter">
                <hr />
                <div class="splitter-btns">
                  <button aria-label="折叠"><svg width="10" height="10"><path d="M1.500 1l3.500 3 3.500-3M1.500 5l3.500 3 3.500-3"/></svg></button>
                  <button aria-label="拆分"><svg width="10" height="10"><path d="M5 1v8"/></svg></button>
                </div>
              </div>
              <div class="tools">
                <h3>${icon("construct")}构造工具</h3>
                <p>选择模板。</p>
              </div>
            </section>
          </main>

          <footer class="status">
            <span class="message"></span><span class="cell-a"></span><span class="cell-b"></span>
            <span class="coords">201.609   174.539 十进制度</span>
          </footer>
        </div>

        <div class="taskbar">
          <div class="search-box"></div>
          <div class="task"></div>
          <div class="clock">16:11</div>
        </div>

        <div class="meter"></div>
        <div class="ime">
          <svg viewBox="0 0 160 76" aria-hidden="true">
            <defs>
              <linearGradient id="shell" x1="0" y1="0" x2="0" y2="1"><stop offset="0" stop-color="#fdfdfd"/><stop offset=".4" stop-color="#d8d8d8"/><stop offset="1" stop-color="#c2c2c2"/></linearGradient>
              <linearGradient id="belly" x1="0" y1="0" x2="1" y2="0"><stop offset="0" stop-color="#f8f6b8"/><stop offset=".7" stop-color="#fbf3c8"/><stop offset="1" stop-color="#fbc592"/></linearGradient>
              <linearGradient id="horn" x1="0" y1="0" x2="1" y2="0"><stop offset="0" stop-color="#b99f80"/><stop offset=".5" stop-color="#f8f0e6"/><stop offset="1" stop-color="#c9ab88"/></linearGradient>
              <filter id="soft" x="-10%" y="-10%" width="120%" height="130%"><feDropShadow dx="-1" dy="2" stdDeviation="2.500" flood-opacity=".25"/></filter>
            </defs>
            <path d="M6 44c4 16 14 26 30 28h84c18-1 32-10 35-28z" fill="url(#belly)" filter="url(#soft)"/>
            <path d="M30 4h100c16 2 27 17 27 33 0 13-7 22-20 26H30C14 59 3 50 3 37 3 20 14 6 30 4z" fill="url(#shell)"/>
            <path d="M14 5c4-5 10-3 10 2-2 9 13 9 14 16 0 7-8 5-14 1C15 19 11 12 14 5z" fill="url(#horn)"/>
            <path d="M146 5c-4-5-11-3-10 3 1 8-10 6-12 13-1 8 7 7 13 3 9-6 13-12 9-19z" fill="url(#horn)"/>
            <path d="M88 30l7-5c2 3 6 3 8 0l7 5-3 7-3-1v12H94V36l-3 1z" fill="#777"/>
            <g transform="rotate(-12 22 45)" fill="none" stroke="#bababa" stroke-width="2"><rect x="14" y="37" width="16" height="15" rx="2"/><path d="M26 41h-7v4h7v4h-8"/></g>
          </svg>
          <span class="ime-lang">中</span>
        </div>
        <div class="mark">CSDN @后端小肥肠</div>
      </div>
    `;
  }
}
